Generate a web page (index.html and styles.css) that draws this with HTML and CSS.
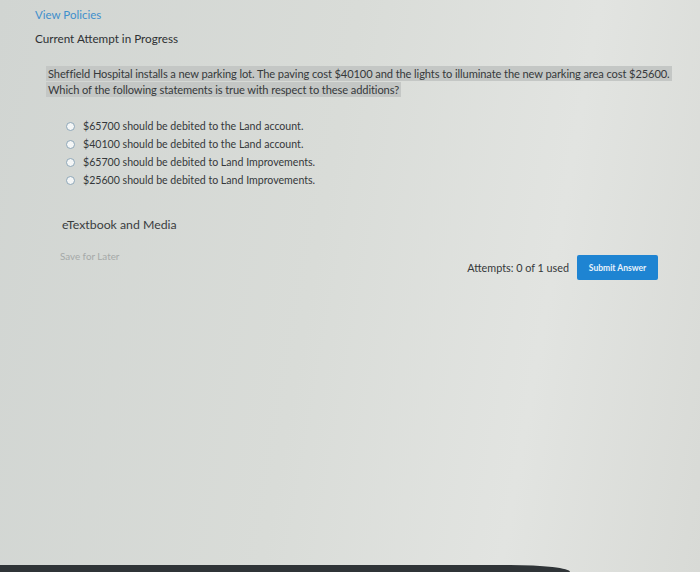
FILE: index.html
```
<!DOCTYPE html>
<html>
<head>
<meta charset="utf-8">
<link rel="stylesheet" href="styles.css">
</head>
<body>
<div class="page">
  <a class="policies">View Policies</a>
  <div class="attempt">Current Attempt in Progress</div>
  <div class="question"><span class="hl">Sheffield Hospital installs a new parking lot. The paving cost $40100 and the lights to illuminate the new parking area cost $25600.</span><br><span class="hl">Which of the following statements is true with respect to these additions?</span></div>
  <ul class="options">
    <li><span class="radio"></span>$65700 should be debited to the Land account.</li>
    <li><span class="radio"></span>$40100 should be debited to the Land account.</li>
    <li><span class="radio"></span>$65700 should be debited to Land Improvements.</li>
    <li><span class="radio"></span>$25600 should be debited to Land Improvements.</li>
  </ul>
  <div class="etext">eTextbook and Media</div>
  <div class="actions">
    <div class="save">Save for Later</div>
    <div class="right">
      <span class="used">Attempts: 0 of 1 used</span>
      <button class="submit">Submit Answer</button>
    </div>
  </div>
</div>
<div class="taskbar"></div>
</body>
</html>
```
FILE: styles.css
```
html, body {
  margin: 0;
  height: 100%;
}
body {
  width: 700px;
  height: 572px;
  overflow: hidden;
  position: relative;
  font-family: Lato, "Open Sans", sans-serif;
  background: linear-gradient(100deg, #d1d5d2 0%, #d9dcd8 45%, #e2e4e1 75%, #d8dad6 100%);
}
.page {
  padding: 8px 0 0 35px;
}
.policies {
  display: block;
  color: #3f8fcc;
  font-size: 11.5px;
  line-height: 14px;
}
.attempt {
  margin-top: 9px;
  color: #2e3133;
  font-size: 11.7px;
  line-height: 15px;
}
.question {
  margin: 20px 0 0 11px;
  width: 640px;
  font-size: 11.1px;
  line-height: 16px;
  color: #36393b;
  letter-spacing: -0.1px;
}
.hl {
  background: #c4c7c5;
  padding: 1px 2px;
}
.options {
  list-style: none;
  margin: 19px 0 0 31px;
  padding: 0;
  font-size: 10.6px;
  color: #35383a;
}
.options li {
  display: flex;
  align-items: center;
  height: 18px;
}
.radio {
  width: 7px;
  height: 7px;
  border: 1px solid #8ea7b8;
  border-radius: 50%;
  background: #f4f6f6;
  margin-right: 8px;
}
.etext {
  margin: 28px 0 0 27px;
  font-size: 12.3px;
  color: #3a3d3f;
}
.actions {
  display: flex;
  justify-content: space-between;
  align-items: flex-start;
  margin: 18px 0 0 25px;
  width: 598px;
}
.save {
  font-size: 9.8px;
  color: #a5a9a8;
}
.right {
  display: flex;
  align-items: center;
  margin-top: 5px;
}
.used {
  font-size: 10.8px;
  color: #35383a;
  margin-right: 8px;
}
.submit {
  background: #1e84d2;
  color: #e9f2fb;
  border: none;
  border-radius: 2px;
  font-family: Lato, sans-serif;
  font-weight: 700;
  font-size: 8.5px;
  width: 81px;
  height: 25px;
  padding: 0;
}
.taskbar {
  position: absolute;
  left: 0;
  bottom: 0;
  width: 570px;
  height: 7px;
  background: #2f3437;
  border-top-right-radius: 60px 7px;
}
```
